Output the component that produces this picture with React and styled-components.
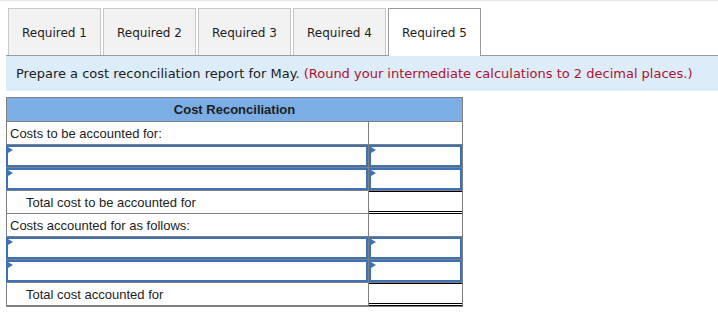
import React from "react";
import styled, { createGlobalStyle } from "styled-components";

const GlobalStyle = createGlobalStyle`
  html, body {
    margin: 0;
    padding: 0;
    background: #fff;
  }
`;

const Page = styled.div`
  border-top: 1px solid #e6e6e6;
  padding: 7px 0 0 6px;
`;

const TabList = styled.div`
  display: flex;
  gap: 2px;
  padding-left: 2px;
  border-bottom: 1px solid #9c9c9c;
  height: 47px;
`;

const Tab = styled.div`
  box-sizing: border-box;
  width: 93px;
  height: ${props => (props.active ? "48px" : "47px")};
  border: 1px solid ${props => (props.active ? "#999" : "#c8c8c8")};
  border-bottom: none;
  background: ${props => (props.active ? "#fff" : "#f2f2f2")};
  display: flex;
  align-items: center;
  justify-content: center;
  padding-top: 1px;
  font-family: "DejaVu Sans", Verdana, sans-serif;
  font-size: 12px;
  color: #1d1d1d;
  position: relative;
  z-index: 1;
`;

const Instruction = styled.div`
  background: #dcecf9;
  height: 35px;
  padding-left: 10px;
  display: flex;
  align-items: center;
  font-family: "DejaVu Sans", Verdana, sans-serif;
  font-size: 13px;
  color: #1d1d1d;
  white-space: nowrap;
`;

const Note = styled.span`
  color: #b0122e;
  margin-left: 4px;
`;

const Table = styled.div`
  margin-top: 6px;
  width: 455px;
  border: 1px solid #7f7f7f;
  display: grid;
  grid-template-columns: 362px 1fr;
  font-family: "Liberation Sans", Arial, sans-serif;
  font-size: 13px;
  color: #1d1d1d;
`;

const Header = styled.div`
  grid-column: 1 / span 2;
  height: 23px;
  background: #7aaee5;
  border-bottom: 1px solid #7f7f7f;
  display: flex;
  align-items: center;
  justify-content: center;
  font-weight: bold;
`;

const Label = styled.div`
  height: 22px;
  border-right: 1px solid #7f7f7f;
  border-bottom: 1px solid #7f7f7f;
  padding-left: ${props => (props.indent ? "19px" : "3px")};
  display: flex;
  align-items: center;
  white-space: nowrap;
`;

const Cell = styled.div`
  height: 22px;
  border-bottom: 1px solid #7f7f7f;
  display: flex;
`;

const TotalBox = styled.div`
  flex: 1;
  border-top: 1px solid #000;
  border-bottom: 3px double #000;
  margin-bottom: -1px;
`;

const InputCell = styled.div`
  height: 22px;
  border-bottom: 1px solid #7f7f7f;
  border-right: ${props => (props.first ? "1px solid #7f7f7f" : "none")};
  position: relative;
  box-shadow: inset 0 0 0 2px #3d72b6;
  margin-left: ${props => (props.first ? "-1px" : "0")};
`;

const Flag = styled.span`
  position: absolute;
  left: 2px;
  top: 2px;
  width: 0;
  height: 0;
  border-top: 3px solid transparent;
  border-bottom: 3px solid transparent;
  border-left: 5px solid #3d72b6;
`;

const InputRow = () => (
  <>
    <InputCell first>
      <Flag />
    </InputCell>
    <InputCell>
      <Flag />
    </InputCell>
  </>
);

const tabs = ["Required 1", "Required 2", "Required 3", "Required 4", "Required 5"];

const App = () => {
  return (
    <Page>
      <GlobalStyle />
      <TabList>
        {tabs.map((t, i) => (
          <Tab key={t} active={i === 4}>
            {t}
          </Tab>
        ))}
      </TabList>
      <Instruction>
        Prepare a cost reconciliation report for May.
        <Note>(Round your intermediate calculations to 2 decimal places.)</Note>
      </Instruction>
      <Table>
        <Header>Cost Reconciliation</Header>
        <Label>Costs to be accounted for:</Label>
        <Cell />
        <InputRow />
        <InputRow />
        <Label indent>Total cost to be accounted for</Label>
        <Cell>
          <TotalBox />
        </Cell>
        <Label>Costs accounted for as follows:</Label>
        <Cell />
        <InputRow />
        <InputRow />
        <Label indent>Total cost accounted for</Label>
        <Cell>
          <TotalBox />
        </Cell>
      </Table>
    </Page>
  );
};

export default App;
